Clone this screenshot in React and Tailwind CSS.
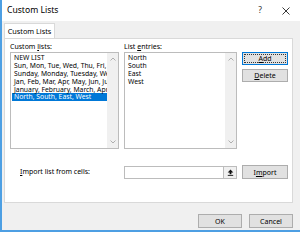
const font = { fontFamily: '"Noto Sans", "Open Sans", sans-serif' }

function Chevron({ up }) {
  return (
    <svg width="6" height="4" viewBox="0 0 6 4" className="block">
      <path d={up ? "M0.5 3.5 L3 1 L5.5 3.5" : "M0.5 0.5 L3 3 L5.5 0.5"} fill="none" stroke="#a6a6a6" strokeWidth="0.9" />
    </svg>
  )
}

function ListBox({ items, selected, className = "" }) {
  return (
    <div className={"flex h-[97px] border border-[#bcbcbc] bg-white " + className}>
      <div className="flex-1 min-w-0 overflow-hidden pt-[1px] pl-[1px]">
        {items.map((it, i) => (
          <div
            key={i}
            className={
              "h-[7.9px] leading-[7.9px] whitespace-nowrap pl-[2px] text-[6.8px] " +
              (i === selected ? "bg-[#0078d7] text-white" : "text-black")
            }
          >
            {it}
          </div>
        ))}
      </div>
      <div className="flex w-[11px] flex-col items-center justify-between bg-[#f0f0f0] py-[4px]">
        <Chevron up />
        <Chevron />
      </div>
    </div>
  )
}

function Btn({ children, primary, className = "" }) {
  return (
    <div
      className={
        "flex h-[13px] items-stretch justify-center bg-[#e1e1e1] text-[7px] leading-none text-black " +
        (primary ? "border border-[#0078d7] p-[1px] " : "border border-[#adadad] ") +
        className
      }
    >
      <div className={"flex flex-1 items-center justify-center " + (primary ? "border border-dotted border-[#333]" : "")}>
        <span>{children}</span>
      </div>
    </div>
  )
}

export default function App() {
  return (
    <div className="flex h-[232px] w-[300px] flex-col overflow-hidden border-b-2 border-l-2 border-[#4d9fe3] bg-[#f0f0f0]" style={font}>
      <div className="flex h-[21px] items-center bg-white pl-[5px] pr-[10px]">
        <span className="text-[8.6px] text-black">Custom Lists</span>
        <span className="ml-auto text-[8.5px] text-[#333]">?</span>
        <svg width="8" height="8" viewBox="0 0 8 8" className="ml-[20px]">
          <path d="M0.5 0.5 L7.5 7.5 M7.5 0.5 L0.5 7.5" stroke="#222" strokeWidth="0.9" />
        </svg>
      </div>

      <div className="flex flex-1 flex-col pl-[2px] pr-[7px] pt-[2px]">
        <div className="flex">
          <div className="flex h-[16px] w-[51px] items-center justify-center border border-b-0 border-[#d9d9d9] bg-white text-[7.3px] text-black">
            Custom Lists
          </div>
        </div>
        <div className="-mt-px flex h-[165px] flex-col border border-[#d9d9d9] bg-white pl-[5px] pt-[3px]">
          <div className="grid grid-cols-[109px_113px_46px] gap-x-[5px]">
            <div className="h-[10px] text-[7px] leading-[10px] text-black">
              Custom <u>l</u>ists:
            </div>
            <div className="h-[10px] text-[7px] leading-[10px] text-black">
              List <u>e</u>ntries:
            </div>
            <div />
            <ListBox
              items={[
                "NEW LIST",
                "Sun, Mon, Tue, Wed, Thu, Fri, Sat",
                "Sunday, Monday, Tuesday, Wednesday",
                "Jan, Feb, Mar, Apr, May, Jun, Jul",
                "January, February, March, April",
                "North, South, East, West",
              ]}
              selected={5}
            />
            <ListBox items={["North", "South", "East", "West"]} />
            <div className="flex flex-col gap-[4px]">
              <Btn primary>
                <u>A</u>dd
              </Btn>
              <Btn>
                <u>D</u>elete
              </Btn>
            </div>
          </div>

          <div className="mt-[16px] grid grid-cols-[109px_113px_46px] items-center gap-x-[5px]">
            <div className="pl-[10px] text-[7px] text-black">
              <u>I</u>mport list from cells:
            </div>
            <div className="flex h-[13px] border border-[#bcbcbc] bg-white">
              <div className="flex-1" />
              <div className="flex w-[13px] items-center justify-center border-l border-[#bcbcbc] bg-[#f0f0f0]">
                <svg width="7" height="7" viewBox="0 0 7 7">
                  <path d="M3.5 0.5 L6.3 3.6 L4.4 3.6 L4.4 5.2 L2.6 5.2 L2.6 3.6 L0.7 3.6 Z" fill="#111" />
                  <path d="M0.8 6.4 H6.2" stroke="#111" strokeWidth="0.9" />
                </svg>
              </div>
            </div>
            <Btn className="h-[14px]">
              I<u>m</u>port
            </Btn>
          </div>
        </div>

        <div className="mt-[11px] flex justify-end gap-[7px]">
          <Btn className="h-[14px] w-[44px]">OK</Btn>
          <Btn className="h-[14px] w-[44px]">Cancel</Btn>
        </div>
      </div>
    </div>
  )
}
